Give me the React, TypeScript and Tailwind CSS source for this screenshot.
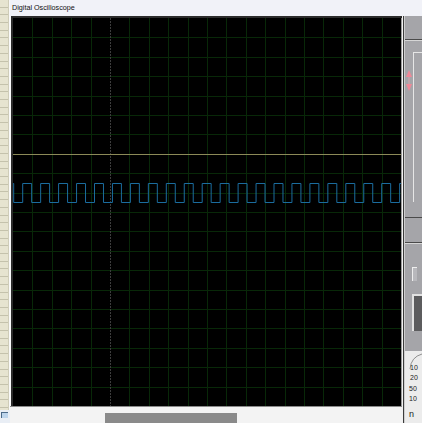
const SIZE = 388;
const STEP = SIZE / 20;
const GRID = Array.from({ length: 19 }, (_, i) => Math.round((i + 1) * STEP) + 0.5);

// square wave trace, half a division above and below grid line 9
function wavePath() {
  const hi = 165.5;
  const lo = 184.5;
  let d = `M0,${hi} L0.7,${hi} L0.7,${lo}`;
  for (let x = 9.7; x < SIZE + 20; x += 17.95) {
    const f = x + 8.97;
    d += ` L${x.toFixed(2)},${lo} L${x.toFixed(2)},${hi} L${f.toFixed(2)},${hi} L${f.toFixed(2)},${lo}`;
  }
  return d;
}

function Screen() {
  return (
    <svg width={SIZE} height={SIZE} viewBox={`0 0 ${SIZE} ${SIZE}`} className="block bg-black">
      {GRID.map((p) => (
        <line key={`h${p}`} x1={0} x2={SIZE} y1={p} y2={p} stroke="#082808" strokeWidth={1} />
      ))}
      {GRID.map((p, i) =>
        i === 4 ? null : (
          <line key={`v${p}`} x1={p} x2={p} y1={0} y2={SIZE} stroke="#082808" strokeWidth={1} />
        ),
      )}
      <line x1={GRID[4]} x2={GRID[4]} y1={0} y2={SIZE} stroke="#3c3c3c" strokeWidth={1} strokeDasharray="2 1" />
      <line x1={0} x2={SIZE} y1={136.5} y2={136.5} stroke="#8c8a58" strokeWidth={1} />
      <path d={wavePath()} fill="none" stroke="#1b6c9e" strokeWidth={1} />
    </svg>
  );
}

function SidePanel() {
  return (
    <div className="flex w-[17px] flex-col bg-[#a5a5a9] text-[7px] leading-none text-[#222]">
      <div className="h-[24px] shrink-0 border-b border-[#4a4a4a]" />
      <div className="flex h-[177px] shrink-0 border-t border-[#d6d6d6]">
        <div className="w-[8px] pt-[29px] pl-[1px]">
          <svg width="6" height="21" viewBox="0 0 6 21">
            <polygon points="3,0 6,7 0,7" fill="#f08898" />
            <line x1="3" x2="3" y1="7" y2="14" stroke="#d9a0aa" strokeWidth="1" />
            <polygon points="0,14 6,14 3,21" fill="#f08898" />
          </svg>
        </div>
        <div className="mt-[11px] h-[150px] flex-1 border-l border-t border-[#e6e6e6]" />
      </div>
      <div className="h-[26px] shrink-0 border-t border-b border-t-[#4a4a4a] border-b-[#4a4a4a]" />
      <div className="flex h-[108px] shrink-0 flex-col border-t border-[#d6d6d6] pl-[7px]">
        <div className="mt-[23px] h-[14px] w-[5px] border-l border-t border-[#eeeeee] bg-[#b8b8bc]" />
        <div className="mt-[13px] h-[37px] w-[10px] border-l-2 border-t-2 border-[#e2e2e2] bg-[#5c5c5e]" />
      </div>
      <div className="flex flex-1 flex-col bg-[#ececec] pl-[4px]">
        <svg width="13" height="16" viewBox="0 0 13 16" className="mt-[2px]">
          <path d="M1,16 Q2,4 13,1" fill="none" stroke="#777" strokeWidth="0.8" />
        </svg>
        <span className="-mt-[5px] pl-[1px]">10</span>
        <span className="mt-[3px] pl-[1px]">20</span>
        <span className="mt-[4px]">50</span>
        <span className="mt-[3px]">10</span>
        <span className="mt-[8px] text-[9px]">n</span>
      </div>
    </div>
  );
}

export default function App() {
  return (
    <div className="flex h-[423px] w-[422px] overflow-hidden bg-[#f0f0f0] font-['Liberation_Sans',Arial,sans-serif]">
      <div className="flex w-[10px] shrink-0 flex-col">
        <div className="flex-1 border-r border-r-[#f8f8f8] bg-[image:repeating-linear-gradient(180deg,#e6e4d0_0px,#e6e4d0_6.7px,#c4c2ac_6.7px,#c4c2ac_7.7px)]">
          <div className="ml-[8px] h-full w-px bg-[#cfcdb8]" />
        </div>
        <div className="flex h-[13px] items-start bg-[#e9eef5] pt-[2px] pl-[1px]">
          <div className="h-[6px] w-[7px] border-t border-l border-[#4a6a8a] bg-[#bcd4ec]" />
        </div>
      </div>
      <div className="flex flex-1 flex-col">
        <div className="h-[16px] shrink-0 bg-[#f1f2f8] pl-[2px] text-[7.2px] leading-[15px] text-[#111]">
          Digital Oscilloscope
        </div>
        <div className="flex flex-1">
          <div className="flex w-[392px] flex-col">
            <div className="flex border-l border-[#fafafa]">
              <div className="border-l-2 border-t-2 border-[#2c2c2c]">
                <Screen />
              </div>
              <div className="w-px border-t-2 border-[#2c2c2c] bg-[#9a9a9a]" />
            </div>
            <div className="flex-1 border-t border-[#8a8a8a] bg-[#f3f3f3] pt-[6px]">
              <div className="ml-[95px] h-[12px] w-[132px] bg-[#8a8a8a]" />
            </div>
          </div>
          <div className="w-px bg-[#f2f2f2]" />
          <div className="w-px bg-[#3c3c3c]" />
          <div className="w-px bg-[#cfcfcf]" />
          <SidePanel />
        </div>
      </div>
    </div>
  );
}
